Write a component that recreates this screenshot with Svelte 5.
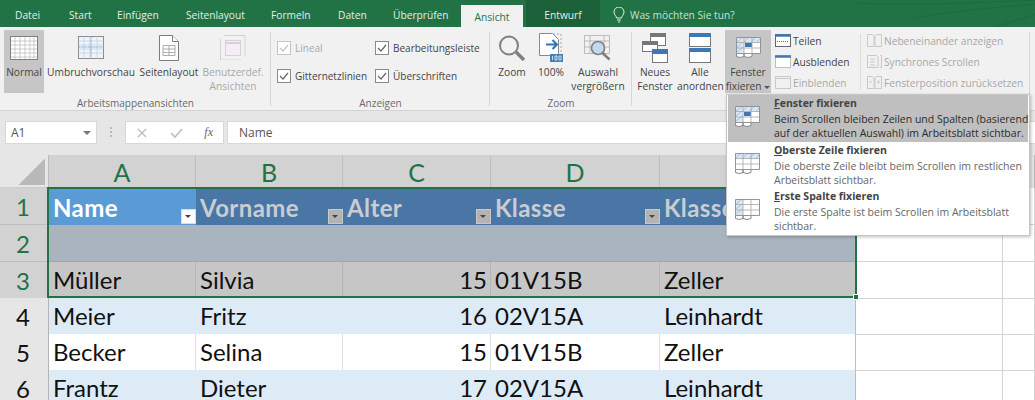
<script>
	const tabs = ['Start', 'Einfügen', 'Seitenlayout', 'Formeln', 'Daten', 'Überprüfen'];
	const cols = ['A', 'B', 'C', 'D', '', '', ''];
	const heads = ['Name', 'Vorname', 'Alter', 'Klasse', 'Klassenlehrer'];
	const rows = [
		{ n: 3, cls: 'sel', v: ['Müller', 'Silvia', '15', '01V15B', 'Zeller'] },
		{ n: 4, cls: 'band', v: ['Meier', 'Fritz', '16', '02V15A', 'Leinhardt'] },
		{ n: 5, cls: 'plain', v: ['Becker', 'Selina', '15', '01V15B', 'Zeller'] },
		{ n: 6, cls: 'band', v: ['Frantz', 'Dieter', '17', '02V15A', 'Leinhardt'] }
	];
	const menu = [
		{ key: 'F', rest: 'enster fixieren', desc: ['Beim Scrollen bleiben Zeilen und Spalten (basierend', 'auf der aktuellen Auswahl) im Arbeitsblatt sichtbar.'], type: 'all' },
		{ key: 'O', rest: 'berste Zeile fixieren', desc: ['Die oberste Zeile bleibt beim Scrollen im restlichen', 'Arbeitsblatt sichtbar.'], type: 'row' },
		{ key: 'E', rest: 'rste Spalte fixieren', desc: ['Die erste Spalte ist beim Scrollen im Arbeitsblatt', 'sichtbar.'], type: 'col' }
	];
</script>

{#snippet freeze(type)}
	<svg width="27" height="24" viewBox="0 0 27 24" fill="none">
		<path d="M1.500 17.500v3q3.500 2 7.500 0v-3M9 17.500v3q4 2 8 0v-3" fill="#fff" stroke="#888" />
		<path d="M1.500 1.500h24v16h-24z" fill="#fff" />
		{#if type !== 'col'}
			<path d="M1.500 1.500h24v5h-24z" fill="#dbe7f4" />
			<path d="M2 6l4-4M9 6l4-4M16 6l4-4M22 6l3-3" stroke="#a3c2e3" />
		{/if}
		{#if type !== 'row'}
			<path d="M1.500 1.500h7.500v16h-7.500z" fill="#dbe7f4" />
			<path d="M2 6l5-4M2 11l6-5M2 16l6-5" stroke="#a3c2e3" />
		{/if}
		{#if type === 'all'}<rect x="10" y="7" width="7" height="4" fill="#3f79b5" />{/if}
		<path d="M1.500 6.500h24M1.500 12h24M9 1.500v16M17 1.500v16" stroke="#a6a6a6" stroke-width=".8" />
		<path d="M1.500 1.500h24v16h-24z" stroke="#8a8a8a" stroke-width=".9" />
	</svg>
{/snippet}

{#snippet check(label, muted)}
	<div class="check" class:muted>
		<svg width="14" height="14" viewBox="0 0 14 14" fill="none">
			<rect x=".5" y=".5" width="13" height="13" fill="#fff" stroke={muted ? '#c4c4c4' : '#8a8a8a'} />
			<path d="M3 7l3 3 5-6" stroke={muted ? '#c4c4c4' : '#666'} stroke-width="1.2" />
		</svg>
		<span>{label}</span>
	</div>
{/snippet}

<div class="app">
	<div class="tabs">
		<span class="tab file">Datei</span>
		{#each tabs as tab}
			<span class="tab">{tab}</span>
		{/each}
		<span class="tab active">Ansicht</span>
		<span class="tab context">Entwurf</span>
		<span class="tell">
			<svg width="12" height="16" viewBox="0 0 12 16" fill="none" stroke="#e4f0e8">
				<path d="M3.500 11c0-2-2.500-3-2.500-6a5 5 0 0 1 10 0c0 3-2.500 4-2.500 6zM4 13h4M5 15h2" />
			</svg>
			Was möchten Sie tun?
		</span>
		<svg class="deco" width="180" height="27" viewBox="0 0 180 27" fill="none" stroke="#1c6b3e">
			<path d="M0 3 C50 6 120 3 180 0M60 18C100 10 140 8 180 4M140 27 180 14" />
		</svg>
	</div>

	<div class="ribbon">
		<section class="group views">
			<div class="body">
				<div class="big on normal">
					<div class="ico">
						<svg width="28" height="24" viewBox="0 0 28 24" fill="#fff">
							<rect x=".5" y=".5" width="27" height="23" />
							<path d="M.5 5h27M.5 9h27M.5 13h27M.5 17h27M.5 21h27M5 .5v23M10 .5v23M15 .5v23M20 .5v23M24 .5v23" stroke="#b8b8b8" stroke-width=".7" />
							<rect x=".5" y=".5" width="27" height="23" fill="none" stroke="#808080" />
						</svg>
					</div>
					<span>Normal</span>
				</div>
				<div class="big umbruch">
					<div class="ico">
						<svg width="26" height="24" viewBox="0 0 26 24" fill="#eef4fa" stroke="#8c8c8c">
							<rect x=".5" y=".5" width="25" height="22" />
							<path d="M.5 5h25M.5 9h25M.5 13h25M.5 17h25M6 .5v22M12 .5v22M19 .5v22" stroke="#c3d3e4" stroke-width=".8" />
							<path d="M13 .5v22M.5 11h25" stroke="#7ea6d2" stroke-dasharray="2 1" />
						</svg>
					</div>
					<span>Umbruchvorschau</span>
				</div>
				<div class="big layout">
					<div class="ico">
						<svg width="20" height="26" viewBox="0 0 20 26" fill="#fff" stroke="#7d7d7d">
							<path d="M.5.5h13l6 6v19h-19z" />
							<path d="M13.500.5v6h6" />
							<path d="M4 10.500h12v10h-12zM4 14h12M4 17.500h12M10 10.500v10" stroke="#9a9a9a" stroke-width=".8" />
						</svg>
					</div>
					<span>Seitenlayout</span>
				</div>
				<div class="big custom muted">
					<div class="ico">
						<svg width="26" height="25" viewBox="0 0 26 25" fill="none" stroke="#d3d3d3">
							<path d="M4 .5h21v21M.5 4v21h21" />
							<rect x="5.500" y="5.500" width="15" height="15" fill="#f3eef5" />
							<path d="M6 8h14" stroke="#d8d0dc" stroke-width="2" />
						</svg>
					</div>
					<span>Benutzerdef.<br />Ansichten</span>
				</div>
			</div>
			<div class="title">Arbeitsmappenansichten</div>
		</section>

		<section class="group show">
			<div class="body checks">
				{@render check('Lineal', true)}
				{@render check('Bearbeitungsleiste', false)}
				{@render check('Gitternetzlinien', false)}
				{@render check('Überschriften', false)}
			</div>
			<div class="title">Anzeigen</div>
		</section>

		<section class="group zoom">
			<div class="body">
				<div class="big zoom-a">
					<div class="ico">
						<svg width="28" height="26" viewBox="0 0 28 26" fill="none" stroke="#7f7f7f">
							<circle cx="11" cy="10.500" r="9" stroke-width="2" />
							<path d="M18 17l8 8" stroke-width="3.400" />
						</svg>
					</div>
					<span>Zoom</span>
				</div>
				<div class="big zoom-b">
					<div class="ico">
						<svg width="26" height="30" viewBox="0 0 26 30" fill="none">
							<path d="M1.500.5h13l6 6v16h-19z" fill="#fff" stroke="#8a8a8a" />
							<path d="M15 1h8v20" stroke="#aaa" stroke-dasharray="2 2" />
							<path d="M8 11.500h11M14.500 7l4.500 4.500-4.500 4.500" stroke="#2e75b6" stroke-width="2" />
							<rect x="12" y="21" width="13" height="8" fill="#4a7fb5" />
							<path d="M14.500 23v4M17 23h2v4h-2zM21 23h2v4h-2z" stroke="#fff" stroke-width=".7" />
						</svg>
					</div>
					<span>100%</span>
				</div>
				<div class="big zoom-c">
					<div class="ico">
						<svg width="28" height="26" viewBox="0 0 28 26" fill="none" stroke="#b5b5b5">
							<path d="M.5.500h25v18h-25zM.5 6h25M.5 12h25M6 .5v18M20 .5v18" stroke-width=".9" />
							<circle cx="14" cy="13" r="6.500" fill="#c5d9ee" stroke="#7f7f7f" stroke-width="1.600" />
							<path d="M18.500 18l7 6.500" stroke="#7f7f7f" stroke-width="2.600" />
						</svg>
					</div>
					<span>Auswahl<br />vergrößern</span>
				</div>
			</div>
			<div class="title">Zoom</div>
		</section>

		<section class="group window">
			<div class="body">
				<div class="big win-a">
					<div class="ico">
						<svg width="26" height="30" viewBox="0 0 26 30" fill="#fff" stroke="#777">
							<rect x="8.500" y=".5" width="15" height="12" />
							<rect x="8.500" y=".5" width="15" height="3" fill="#777" />
							<rect x=".5" y="8.500" width="15" height="10" />
							<rect x=".5" y="8.500" width="15" height="3" fill="#777" />
							<rect x="10.500" y="16.500" width="15" height="13" />
							<rect x="10.500" y="16.500" width="15" height="4" fill="#3f79b5" stroke="#3f79b5" />
						</svg>
					</div>
					<span>Neues<br />Fenster</span>
				</div>
				<div class="big win-b">
					<div class="ico">
						<svg width="22" height="30" viewBox="0 0 22 30" fill="#fff" stroke="#777">
							<rect x=".5" y=".5" width="21" height="13" />
							<rect x=".5" y=".5" width="21" height="3" fill="#3f79b5" stroke="#3f79b5" />
							<rect x=".5" y="15.500" width="21" height="14" />
							<rect x=".5" y="15.500" width="21" height="3" fill="#3f79b5" stroke="#3f79b5" />
						</svg>
					</div>
					<span>Alle<br />anordnen</span>
				</div>
				<div class="big on win-c">
					<div class="ico">{@render freeze('all')}</div>
					<span>Fenster<br />fixieren <i class="caret"></i></span>
				</div>
				<div class="small-col">
					<div class="small">
						<svg width="16" height="13" viewBox="0 0 16 13" fill="#fff" stroke="#666">
							<rect x=".5" y=".5" width="15" height="12" />
							<path d="M.5 1.500h15" stroke="#3f79b5" stroke-width="2.500" />
							<path d="M2 7.500h12" stroke="#3f79b5" stroke-dasharray="1 1" />
						</svg>
						Teilen
					</div>
					<div class="small">
						<svg width="16" height="13" viewBox="0 0 16 13" fill="#fff" stroke="#888" stroke-dasharray="1 1">
							<rect x=".5" y=".5" width="15" height="12" />
							<path d="M0 1.500h16" stroke="#3f79b5" stroke-width="2.500" stroke-dasharray="none" />
						</svg>
						Ausblenden
					</div>
					<div class="small muted">
						<svg width="16" height="13" viewBox="0 0 16 13" fill="none" stroke="#c8c8c8">
							<rect x=".5" y=".5" width="15" height="12" />
							<path d="M.5 2.500h15" />
						</svg>
						Einblenden
					</div>
				</div>
				<div class="small-col compare">
					<div class="small muted">
						<svg width="15" height="13" viewBox="0 0 15 13" fill="none" stroke="#c8c8c8">
							<path d="M.5.5h5l1.500 1.500v10.500h-6.500zM8 2l1.500-1.500h5v12h-6.500z" />
						</svg>
						Nebeneinander anzeigen
					</div>
					<div class="small muted">
						<svg width="15" height="13" viewBox="0 0 15 13" fill="none" stroke="#c8c8c8">
							<path d="M.5.5h9l1.500 1.500v10.500h-10.500zM3 4h5M3 7h5M3 10h5M13 .5h1.500v12h-1.500" />
						</svg>
						Synchrones Scrollen
					</div>
					<div class="small muted">
						<svg width="15" height="13" viewBox="0 0 15 13" fill="none" stroke="#c8c8c8">
							<path d="M.5.5h5l1.500 1.500v10.500h-6.500zM8 2l1.500-1.500h5v12h-6.500zM2 6h3M10 6h3M11.500 4.500v3" />
						</svg>
						Fensterposition zurücksetzen
					</div>
				</div>
			</div>
		</section>
	</div>

	<div class="formula">
		<div class="namebox">A1<i class="caret dark"></i></div>
		<div class="dots"></div>
		<div class="fx">
			<svg width="12" height="12" viewBox="0 0 12 12" stroke="#bdbdbd" stroke-width="1.400"><path d="M2 2l8 8M10 2l-8 8" /></svg>
			<svg width="13" height="12" viewBox="0 0 13 12" fill="none" stroke="#bdbdbd" stroke-width="1.600"><path d="M1 6l4 4 7-8" /></svg>
			<span>fx</span>
		</div>
		<div class="input">Name</div>
	</div>

	<div class="sheet">
		<div class="row head-row">
			<div class="corner"></div>
			{#each cols as c, i}
				<div class="c{i} col" class:picked={i < 5}>{c}</div>
			{/each}
		</div>

		<div class="row h1">
			<div class="rh picked">1</div>
			{#each heads as h, i}
				<div class="c{i} th" class:first={i === 0}>
					<span>{h}</span>
					<i class="filter"><b></b></i>
				</div>
			{/each}
			<div class="c5 blank"></div><div class="c6 blank"></div>
		</div>

		<div class="row h2">
			<div class="rh picked">2</div>
			<div class="empty-band"></div>
			<div class="c5 blank"></div><div class="c6 blank"></div>
		</div>

		{#each rows as r}
			<div class="row {r.cls}">
				<div class="rh" class:picked={r.cls === 'sel'}>{r.n}</div>
				{#each r.v as v, i}
					<div class="c{i} td" class:num={i === 2}>{v}</div>
				{/each}
				<div class="c5 blank"></div><div class="c6 blank"></div>
			</div>
		{/each}

		<div class="selection"><i></i></div>
	</div>

	<div class="menu">
		{#each menu as m, i}
			<div class="item" class:hot={i === 0}>
				<div class="menu-ico">{@render freeze(m.type)}</div>
				<div>
					<div class="item-title"><u>{m.key}</u>{m.rest}</div>
					{#each m.desc as line}
						<div class="item-desc">{line}</div>
					{/each}
				</div>
			</div>
		{/each}
	</div>
</div>

<style>
	:global(body) {
		margin: 0;
	}

	.app {
		position: relative;
		width: 1035px;
		height: 400px;
		overflow: hidden;
		font-family: 'Open Sans', 'Noto Sans', sans-serif;
		font-size: 10.2px;
		color: #444;
		background: #fff;
	}

	/* tab strip */
	.tabs {
		position: relative;
		display: flex;
		height: 27px;
		background: #217346;
		color: #e3efe7;
		line-height: 31px;
		overflow: hidden;
	}

	.tab:nth-child(1) { margin-left: 15px; width: 54px; }
	.tab:nth-child(2) { width: 48px; }
	.tab:nth-child(3) { width: 69px; }
	.tab:nth-child(4) { width: 85px; }
	.tab:nth-child(5) { width: 67px; }
	.tab:nth-child(6) { width: 55px; }
	.tab:nth-child(7) { width: 68px; }

	.tab.active {
		box-sizing: border-box;
		width: 62px;
		margin-top: 5px;
		background: #f1f1f1;
		color: #217346;
		text-align: center;
		line-height: 25px;
	}

	.tab.context {
		width: 74px;
		margin-left: 3px;
		background: #1c6039;
		text-align: center;
	}

	.tell {
		display: flex;
		align-items: center;
		gap: 5px;
		margin-left: 13px;
		color: #c8e0d2;
		line-height: 1;
		padding-top: 3px;
	}

	.deco {
		position: absolute;
		right: 0;
		top: 0;
	}

	/* ribbon */
	.ribbon {
		display: flex;
		box-sizing: border-box;
		height: 84px;
		background: #f1f1f1;
		border-bottom: 1px solid #d4d4d4;
	}

	.group {
		position: relative;
		display: flex;
		flex-direction: column;
		box-sizing: border-box;
		padding-top: 3px;
	}

	.group::after {
		content: '';
		position: absolute;
		right: 0;
		top: 5px;
		bottom: 4px;
		width: 1px;
		background: #d6d6d6;
	}

	.views { width: 271px; padding-left: 4px; }
	.show { width: 219px; }
	.zoom { width: 142px; }
	.window { width: 398px; }

	.body {
		display: flex;
		height: 67px;
	}

	.title {
		text-align: center;
		line-height: 14px;
		color: #6a6a6a;
		font-size: 10px;
	}

	.views .title { padding-right: 4px; }

	.big {
		flex: none;
		height: 63px;
		text-align: center;
		line-height: 14px;
		color: #444;
		white-space: nowrap;
	}

	.big.on { background: #c6c6c6; }
	.big .ico {
		display: flex;
		align-items: center;
		justify-content: center;
		height: 35px;
	}

	.muted { color: #a8a8a8 !important; }

	.normal { width: 40px; }
	.umbruch { width: 90px; margin-left: 2px; }
	.layout { width: 60px; margin-left: 3px; }
	.custom { width: 66px; margin-left: 1px; }
	.zoom-a { width: 42px; margin-left: 1px; }
	.zoom-b { width: 36px; }
	.zoom-c { width: 58px; }
	.win-a { width: 42px; margin-left: 2px; }
	.win-b { width: 46px; margin-left: 1px; }
	.win-c { width: 46px; margin-left: 2px; }

	.checks {
		display: grid;
		grid-template-columns: 98px 1fr;
		grid-template-rows: 28px 28px;
		padding: 4px 0 0 6px;
	}

	.check {
		display: flex;
		align-items: center;
		gap: 4px;
		white-space: nowrap;
		font-size: 10px;
	}

	.check svg { flex: none; }

	.small-col {
		display: flex;
		flex-direction: column;
		padding-left: 4px;
		width: 85px;
		flex: none;
		white-space: nowrap;
	}

	.small {
		display: flex;
		align-items: center;
		gap: 2px;
		height: 21px;
		color: #444;
	}

	.compare {
		position: relative;
		width: auto;
		padding-left: 7px;
	}

	.compare::before {
		content: '';
		position: absolute;
		left: 0;
		top: 4px;
		height: 56px;
		width: 1px;
		background: #dcdcdc;
	}

	.caret {
		display: inline-block;
		width: 0;
		height: 0;
		vertical-align: middle;
		border: 3px solid transparent;
		border-top-color: #555;
		border-bottom: 0;
	}

	/* formula bar */
	.formula {
		display: flex;
		box-sizing: border-box;
		height: 44px;
		padding: 10px 0 0 5px;
		background: #e6e6e6;
	}

	.formula > div {
		box-sizing: border-box;
		height: 23px;
		background: #fff;
		border: 1px solid #d8d8d8;
		line-height: 21px;
		font-size: 12px;
		color: #555;
	}

	.namebox {
		display: flex;
		justify-content: space-between;
		align-items: center;
		width: 92px;
		padding: 0 5px;
	}

	.caret.dark { border-width: 4px; border-bottom: 0; border-top-color: #777; }

	.formula > .dots {
		width: 2px;
		height: 11px;
		margin: 6px 13px 0 13px;
		border: 0;
		background: repeating-linear-gradient(#bbb 0 2px, transparent 2px 4px);
	}

	.fx {
		display: flex;
		align-items: center;
		justify-content: space-between;
		width: 99px;
		padding: 0 10px;
	}

	.fx span {
		font-family: 'Liberation Serif', serif;
		font-style: italic;
		font-size: 12px;
		color: #666;
	}

	.formula > .input {
		flex: 1;
		margin-left: 3px;
		padding-left: 11px;
		border-right: 0;
	}

	/* sheet */
	.sheet {
		position: relative;
		font-family: Lato, 'Open Sans', sans-serif;
	}

	.row {
		display: grid;
		grid-template-columns: 49px 147px 147px 148px 169px 196px 147px 1fr;
		box-sizing: border-box;
		height: 36px;
		font-size: 24px;
		color: #111;
	}

	.head-row { height: 33px; }
	.h1 { height: 37px; }
	.h2 { height: 37px; }

	.corner {
		background: linear-gradient(135deg, #e6e6e6 50%, #b9b9b9 50%);
		border-right: 1px solid #bbb;
		border-bottom: 1px solid #ccc;
		background-size: 27px 27px;
		background-position: 18px 3px;
		background-repeat: no-repeat;
		background-color: #e6e6e6;
	}

	.col {
		display: flex;
		align-items: center;
		justify-content: center;
		box-sizing: border-box;
		border-right: 1px solid #b9b9b9;
		background: #e6e6e6;
		color: #217346;
		font-size: 25px;
	}

	.col.picked {
		background: #d2d2d2;
		border-right-color: #bebebe;
	}

	.rh {
		display: flex;
		align-items: center;
		justify-content: center;
		box-sizing: border-box;
		width: 49px;
		background: #e6e6e6;
		border-right: 1px solid #b4b4b4;
		border-bottom: 1px solid #d4d4d4;
		padding-right: 2px;
	}

	.rh.picked {
		background: #d2d2d2;
		color: #217346;
		border-bottom-color: #bdbdbd;
	}

	.blank {
		border-right: 1px solid #d4d4d4;
		border-bottom: 1px solid #d4d4d4;
	}

	.th {
		position: relative;
		box-sizing: border-box;
		padding: 2px 0 0 4px;
		background: #4a76a5;
		color: #c9cdd2;
		font-weight: 700;
		line-height: 36px;
		letter-spacing: 0.4px;
		white-space: nowrap;
		overflow: hidden;
	}

	.th.first {
		background: #5b9bd5;
		color: #fff;
	}

	.filter {
		position: absolute;
		right: 0;
		bottom: 1px;
		box-sizing: border-box;
		width: 15px;
		height: 15px;
		background: #b3b3b3;
		border: 1px solid #c8c8c8;
	}

	.first .filter {
		background: #fff;
		border-color: #ddd;
	}

	.filter b {
		position: absolute;
		left: 3px;
		top: 5px;
		border: 3.500px solid transparent;
		border-top-color: #444;
		border-bottom: 0;
	}

	.empty-band {
		grid-column: span 5;
		background: #aab4bf;
		border-bottom: 1px solid #93aac5;
	}

	.td {
		box-sizing: border-box;
		padding-left: 4px;
		line-height: 36px;
		white-space: nowrap;
		border-right: 1px solid #e0e0e0;
	}

	.num {
		text-align: right;
		padding-right: 3px;
	}

	.sel .td {
		background: #c6c6c6;
		border-right-color: #b4b4b4;
		border-bottom: 1px solid #b4b4b4;
	}

	.band .td {
		background: #ddebf7;
		border-right-color: #ddebf7;
		border-bottom: 1px solid #bcd6ee;
	}

	.plain .td {
		background: #fff;
		border-bottom: 1px solid #9bc2e6;
	}

	.row .c4.td { border-right-color: #a3c2e8; }

	.selection {
		position: absolute;
		left: 47px;
		top: 32px;
		box-sizing: border-box;
		width: 810px;
		height: 111px;
		border: 2px solid #217346;
		pointer-events: none;
	}

	.selection i {
		position: absolute;
		right: -4px;
		bottom: -4px;
		background: #217346;
		border: 1px solid #fff;
		width: 4px;
		height: 4px;
	}

	/* dropdown */
	.menu {
		position: absolute;
		left: 726px;
		top: 94px;
		box-sizing: border-box;
		width: 304px;
		height: 142px;
		padding: 0 1px;
		background: #fff;
		border: 1px solid #c6c6c6;
		box-shadow: 1px 1px 3px rgba(0, 0, 0, 0.25);
	}

	.item {
		display: flex;
		box-sizing: border-box;
		height: 46.500px;
		padding-left: 6px;
		color: #666;
		font-size: 10.500px;
		white-space: nowrap;
	}

	.item.hot {
		background: #bfbfbf;
		color: #2b2b2b;
	}

	.menu-ico {
		flex: none;
		width: 40px;
		padding-top: 10px;
	}

	.item-title {
		font-weight: 700;
		color: #444;
		font-size: 10.500px;
		line-height: 17px;
	}

	.item-desc {
		line-height: 14px;
	}
</style>
